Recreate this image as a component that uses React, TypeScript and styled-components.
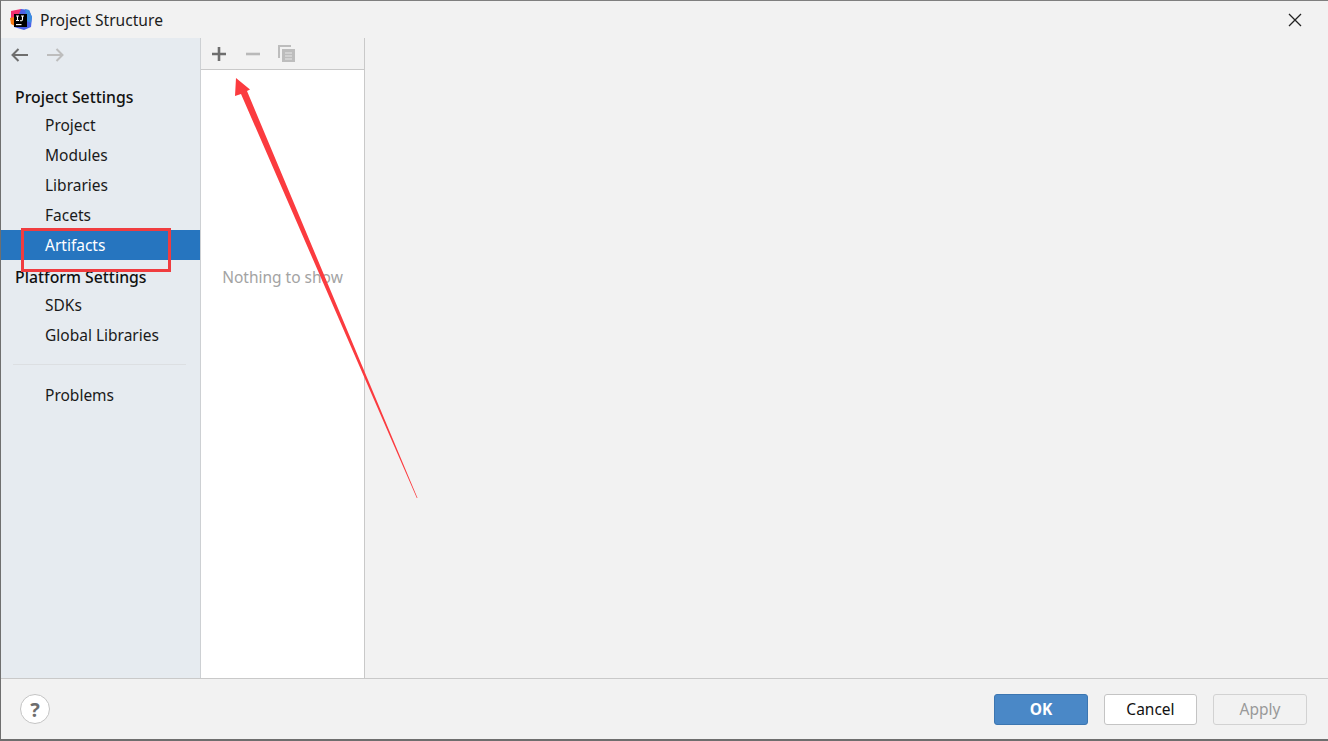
import styled, { createGlobalStyle } from 'styled-components';

const GlobalStyle = createGlobalStyle`
  html, body {
    margin: 0;
    padding: 0;
    background: #f2f2f2;
  }
  body {
    font-family: "Noto Sans", "Open Sans", "Liberation Sans", sans-serif;
    overflow: hidden;
  }
`;

const Dialog = styled.div`
  position: relative;
  width: 1328px;
  height: 741px;
  box-sizing: border-box;
  display: flex;
  flex-direction: column;
  background: #f2f2f2;
  border-top: 1px solid #7f7f7f;
  border-left: 1px solid #6f6f6f;
  border-bottom: 2px solid #6e6e6e;
  overflow: hidden;
`;

const TitleBar = styled.div`
  height: 37px;
  flex: none;
  display: flex;
  align-items: center;
  padding: 0 26px 0 9px;
  gap: 8px;
`;

const Title = styled.div`
  flex: 1;
  font-size: 15.6px;
  color: #1c1c1c;
`;

const Body = styled.div`
  flex: 1;
  min-height: 0;
  display: flex;
`;

const Sidebar = styled.div`
  width: 199px;
  flex: none;
  background: #e6ebf0;
  border-right: 1px solid #cdd0d3;
  display: flex;
  flex-direction: column;
`;

const NavButtons = styled.div`
  height: 33px;
  flex: none;
  display: flex;
  align-items: flex-start;
  gap: 15px;
  padding: 9px 0 0 9px;
`;

const SectionTitle = styled.div`
  height: 26px;
  line-height: 26px;
  padding: 4px 0 0 14px;
  font-size: 15.8px;
  font-weight: 500;
  color: #111;
`;

const NavItem = styled.div<{ $selected?: boolean }>`
  height: 30px;
  line-height: 30px;
  padding-left: 44px;
  font-size: 15.5px;
  color: ${(p) => (p.$selected ? '#fff' : '#1a1a1a')};
  background: ${(p) => (p.$selected ? '#2675bf' : 'transparent')};
`;

const Separator = styled.div`
  height: 1px;
  margin: 14px 14px 15px 12px;
  background: #dcdfe2;
`;

const ListPanel = styled.div`
  width: 163px;
  flex: none;
  border-right: 1px solid #c9c9c9;
  display: flex;
  flex-direction: column;
`;

const ListToolbar = styled.div`
  height: 31px;
  flex: none;
  border-bottom: 1px solid #c9c9c9;
  display: flex;
  align-items: center;
  gap: 14px;
  padding-left: 8px;
`;

const EmptyList = styled.div`
  flex: 1;
  background: #fff;
  padding-top: 195px;
  text-align: center;
  font-size: 15.5px;
  line-height: 24px;
  color: #a3a3a3;
`;

const Content = styled.div`
  flex: 1;
`;

const Footer = styled.div`
  height: 60px;
  flex: none;
  border-top: 1px solid #c9c9c9;
  display: flex;
  align-items: center;
  padding: 0 21px 0 19px;
`;

const HelpButton = styled.div`
  width: 28px;
  height: 28px;
  border-radius: 50%;
  background: #fff;
  border: 1px solid #c4c4c4;
  display: flex;
  align-items: center;
  justify-content: center;
  font-size: 20px;
  font-weight: 700;
  color: #6e6e6e;
`;

const ButtonRow = styled.div`
  margin-left: auto;
  display: flex;
  gap: 16px;
`;

const Button = styled.div<{ $variant?: 'primary' | 'disabled'; $width?: number }>`
  width: ${(p) => p.$width ?? 94}px;
  height: 31px;
  box-sizing: border-box;
  border-radius: 3px;
  display: flex;
  align-items: center;
  justify-content: center;
  font-size: 15.5px;
  font-weight: ${(p) => (p.$variant === 'primary' ? 700 : 400)};
  color: ${(p) => (p.$variant === 'primary' ? '#fff' : p.$variant === 'disabled' ? '#999' : '#111')};
  background: ${(p) => (p.$variant === 'primary' ? '#4a88c7' : p.$variant === 'disabled' ? '#f2f2f2' : '#fff')};
  border: 1px solid ${(p) => (p.$variant === 'primary' ? '#3c76b1' : p.$variant === 'disabled' ? '#d2d2d2' : '#c4c4c4')};
`;

const Annotation = styled.svg`
  position: absolute;
  left: -1px;
  top: -1px;
  pointer-events: none;
`;

const Logo = () => (
  <svg width="22" height="22" viewBox="0 0 22 22">
    <path d="M1 2 L11 0 L15 5 L5 15 L1 9 Z" fill="#f5306f" />
    <path d="M0 9 L4 8 L5 17 L1 15 Z" fill="#f97a12" />
    <path d="M11 0 L19 1 L22 8 L21 18 L14 21 L4 18 Z" fill="#4b62e8" />
    <path d="M15 0 L19 1 L22 8 L21 14 L17 12 Z" fill="#3a8de0" />
    <rect x="4" y="5" width="13" height="13" fill="#000" />
    <path d="M6 7 H9 M7.5 7 V11.5 M6 11.5 H9 M10 11.5 Q12.5 12.5 12.5 10 V7 M11 7 H14" stroke="#fff" strokeWidth="1.1" fill="none" />
    <rect x="6" y="15" width="5.5" height="1.2" fill="#fff" />
  </svg>
);

const CloseIcon = () => (
  <svg width="14" height="14" viewBox="0 0 14 14">
    <path d="M1 1 L13 13 M13 1 L1 13" stroke="#222" strokeWidth="1.3" />
  </svg>
);

const ArrowIcon = ({ color, flip }: { color: string; flip?: boolean }) => (
  <svg width="20" height="16" viewBox="0 0 20 16" style={flip ? { transform: 'scaleX(-1)' } : undefined}>
    <path d="M2 8 H18 M8.5 2 L2.5 8 L8.5 14" stroke={color} strokeWidth="2" fill="none" />
  </svg>
);

const PlusIcon = () => (
  <svg width="20" height="20" viewBox="0 0 20 20">
    <path d="M3 10 H17 M10 3 V17" stroke="#6e6e6e" strokeWidth="2.6" />
  </svg>
);

const MinusIcon = () => (
  <svg width="20" height="20" viewBox="0 0 20 20">
    <path d="M3 10 H17" stroke="#b9b9b9" strokeWidth="2.6" />
  </svg>
);

const CopyIcon = () => (
  <svg width="20" height="20" viewBox="0 0 20 20">
    <path d="M2 14 V2 H14" stroke="#bdbdbd" strokeWidth="2" fill="none" />
    <rect x="5" y="5" width="13" height="13" fill="#bdbdbd" />
    <path d="M8 9 H15 M8 12 H15 M8 15 H15" stroke="#e8e8e8" strokeWidth="1.2" />
  </svg>
);

const App = () => {
  return (
    <>
      <GlobalStyle />
      <Dialog>
        <TitleBar>
          <Logo />
          <Title>Project Structure</Title>
          <CloseIcon />
        </TitleBar>
        <Body>
          <Sidebar>
            <NavButtons>
              <ArrowIcon color="#6e6e6e" />
              <ArrowIcon color="#bdbdbd" flip />
            </NavButtons>
            <SectionTitle>Project Settings</SectionTitle>
            <NavItem>Project</NavItem>
            <NavItem>Modules</NavItem>
            <NavItem>Libraries</NavItem>
            <NavItem>Facets</NavItem>
            <NavItem $selected>Artifacts</NavItem>
            <SectionTitle>Platform Settings</SectionTitle>
            <NavItem>SDKs</NavItem>
            <NavItem>Global Libraries</NavItem>
            <Separator />
            <NavItem>Problems</NavItem>
          </Sidebar>
          <ListPanel>
            <ListToolbar>
              <PlusIcon />
              <MinusIcon />
              <CopyIcon />
            </ListToolbar>
            <EmptyList>Nothing to show</EmptyList>
          </ListPanel>
          <Content />
        </Body>
        <Footer>
          <HelpButton>?</HelpButton>
          <ButtonRow>
            <Button $variant="primary">OK</Button>
            <Button $width={93}>Cancel</Button>
            <Button $variant="disabled">Apply</Button>
          </ButtonRow>
        </Footer>
        <Annotation width="1328" height="741" viewBox="0 0 1328 741">
          <rect x="22.5" y="229.5" width="147" height="41" fill="none" stroke="#f03c3f" strokeWidth="3" />
          <path d="M236 78 L250 89.5 L247 91 L417.5 498 L416.8 498 L241 94 L235 96 Z" fill="#fb3b3f" />
        </Annotation>
      </Dialog>
    </>
  );
};

export default App;
